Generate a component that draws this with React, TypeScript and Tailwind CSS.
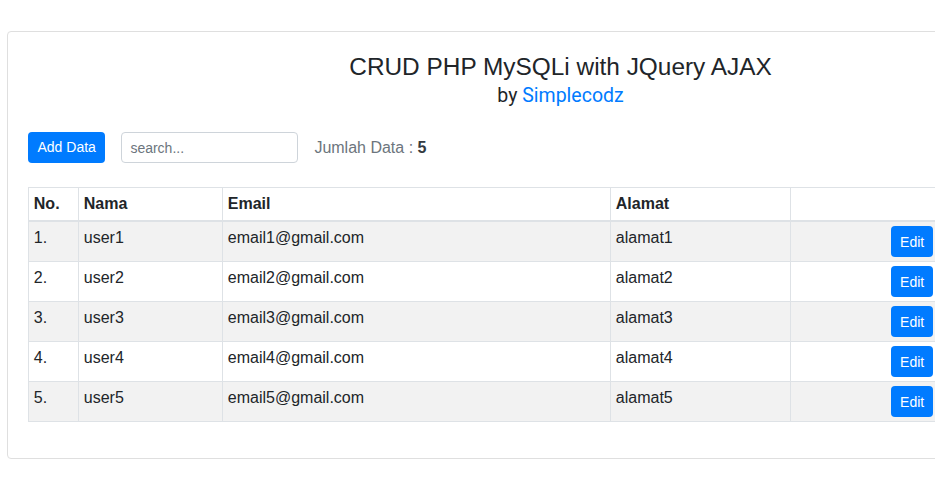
import React from 'react';

const users = [1, 2, 3, 4, 5].map((n) => ({
  no: n,
  nama: `user${n}`,
  email: `email${n}@gmail.com`,
  alamat: `alamat${n}`,
}));

export default function App() {
  return (
    <div className="w-full overflow-hidden bg-white font-['Liberation_Sans',Arial,sans-serif] text-[#212529]">
      <div className="w-[1104px] pl-[7px] pt-[31px] pb-8">
        <div className="rounded border border-[#dfdfdf] p-5">
          <div className="pl-[10px] text-center">
            <h2 className="text-[24.4px] leading-[29px]">CRUD PHP MySQLi with JQuery AJAX</h2>
            <p className="mt-[3px] font-['Roboto',sans-serif] text-[19.5px] leading-[24px]">
              by <a className="text-[#007bff]">Simplecodz</a>
            </p>
          </div>

          <div className="mt-[24px] flex items-center">
            <button className="h-[31px] rounded bg-[#007bff] px-[9.5px] text-[14px] text-white">Add Data</button>
            <input
              className="ml-4 h-[31px] w-[177px] rounded border border-[#ced4da] px-2 text-[14px] placeholder:text-[#6c757d]"
              placeholder="search..."
            />
            <span className="ml-4 text-[16px] text-[#6c757d]">
              Jumlah Data : <b className="text-[#343a40]">5</b>
            </span>
          </div>

          <table className="mt-6 mb-4 w-[911px] table-fixed border-collapse text-[16px] leading-6">
            <thead>
              <tr>
                <th className="w-[50px] border border-b-2 border-[#dee2e6] px-[0.3rem] py-1 text-left">No.</th>
                <th className="w-[144px] border border-b-2 border-[#dee2e6] px-[0.3rem] py-1 text-left">Nama</th>
                <th className="w-[388px] border border-b-2 border-[#dee2e6] px-[0.3rem] py-1 text-left">Email</th>
                <th className="w-[180px] border border-b-2 border-[#dee2e6] px-[0.3rem] py-1 text-left">Alamat</th>
                <th className="border border-b-2 border-[#dee2e6] px-[0.3rem] py-1"></th>
              </tr>
            </thead>
            <tbody>
              {users.map((u) => (
                <tr key={u.no} className={u.no % 2 === 1 ? 'bg-[#f2f2f2]' : 'bg-white'}>
                  <td className="border border-[#dee2e6] px-[0.3rem] py-1 align-top">{u.no}.</td>
                  <td className="border border-[#dee2e6] px-[0.3rem] py-1 align-top">{u.nama}</td>
                  <td className="border border-[#dee2e6] px-[0.3rem] py-1 align-top">{u.email}</td>
                  <td className="border border-[#dee2e6] px-[0.3rem] py-1 align-top">{u.alamat}</td>
                  <td className="border border-[#dee2e6] px-[0.3rem] py-1 text-right align-top">
                    <button className="h-[31px] rounded bg-[#007bff] px-[9px] text-[14px] text-white">Edit</button>
                  </td>
                </tr>
              ))}
            </tbody>
          </table>
        </div>
      </div>
    </div>
  );
}
